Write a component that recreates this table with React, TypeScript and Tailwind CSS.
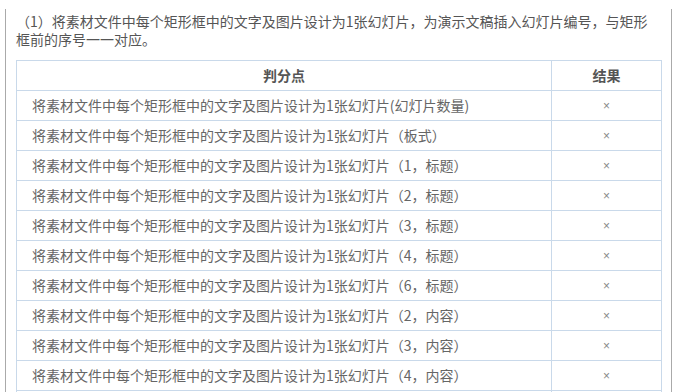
import React from "react";

const rows = [
  "将素材文件中每个矩形框中的文字及图片设计为1张幻灯片(幻灯片数量)",
  "将素材文件中每个矩形框中的文字及图片设计为1张幻灯片（板式）",
  "将素材文件中每个矩形框中的文字及图片设计为1张幻灯片（1，标题）",
  "将素材文件中每个矩形框中的文字及图片设计为1张幻灯片（2，标题）",
  "将素材文件中每个矩形框中的文字及图片设计为1张幻灯片（3，标题）",
  "将素材文件中每个矩形框中的文字及图片设计为1张幻灯片（4，标题）",
  "将素材文件中每个矩形框中的文字及图片设计为1张幻灯片（6，标题）",
  "将素材文件中每个矩形框中的文字及图片设计为1张幻灯片（2，内容）",
  "将素材文件中每个矩形框中的文字及图片设计为1张幻灯片（3，内容）",
  "将素材文件中每个矩形框中的文字及图片设计为1张幻灯片（4，内容）",
];

export default function App() {
  return (
    <div
      className="w-[674px] h-[392px] overflow-hidden bg-white text-[14px] text-[#666]"
      style={{ fontFamily: '"Microsoft YaHei", "Noto Sans CJK SC", sans-serif' }}
    >
      <div className="ml-[5px] mt-[9px] w-[667px] border-x border-[#aaa] px-[10px] pt-[3px] pb-4">
        <p className="leading-[18px] text-[#555]">
          （1）将素材文件中每个矩形框中的文字及图片设计为1张幻灯片，为演示文稿插入幻灯片编号，与矩形框前的序号一一对应。
        </p>
        <table className="mt-[12px] w-[646px] border-collapse">
          <thead>
            <tr className="h-[30px]">
              <th className="border border-[#c9d9ea] text-center font-bold text-[#555] p-0">判分点</th>
              <th className="w-[110px] border border-[#c9d9ea] text-center font-bold text-[#555] p-0">结果</th>
            </tr>
          </thead>
          <tbody>
            {rows.map((r, i) => (
              <tr key={i} className="h-[30px]">
                <td className="border border-[#c9d9ea] pl-[15px] py-0 text-left text-[#666]">{r}</td>
                <td
                  className="border border-[#c9d9ea] text-center text-[12px] text-[#888] p-0"
                  style={{ fontFamily: '"Liberation Sans", sans-serif' }}
                >
                  ×
                </td>
              </tr>
            ))}
            <tr className="h-[30px]">
              <td className="border border-[#c9d9ea] p-0"></td>
              <td className="border border-[#c9d9ea] p-0"></td>
            </tr>
          </tbody>
        </table>
      </div>
    </div>
  );
}
